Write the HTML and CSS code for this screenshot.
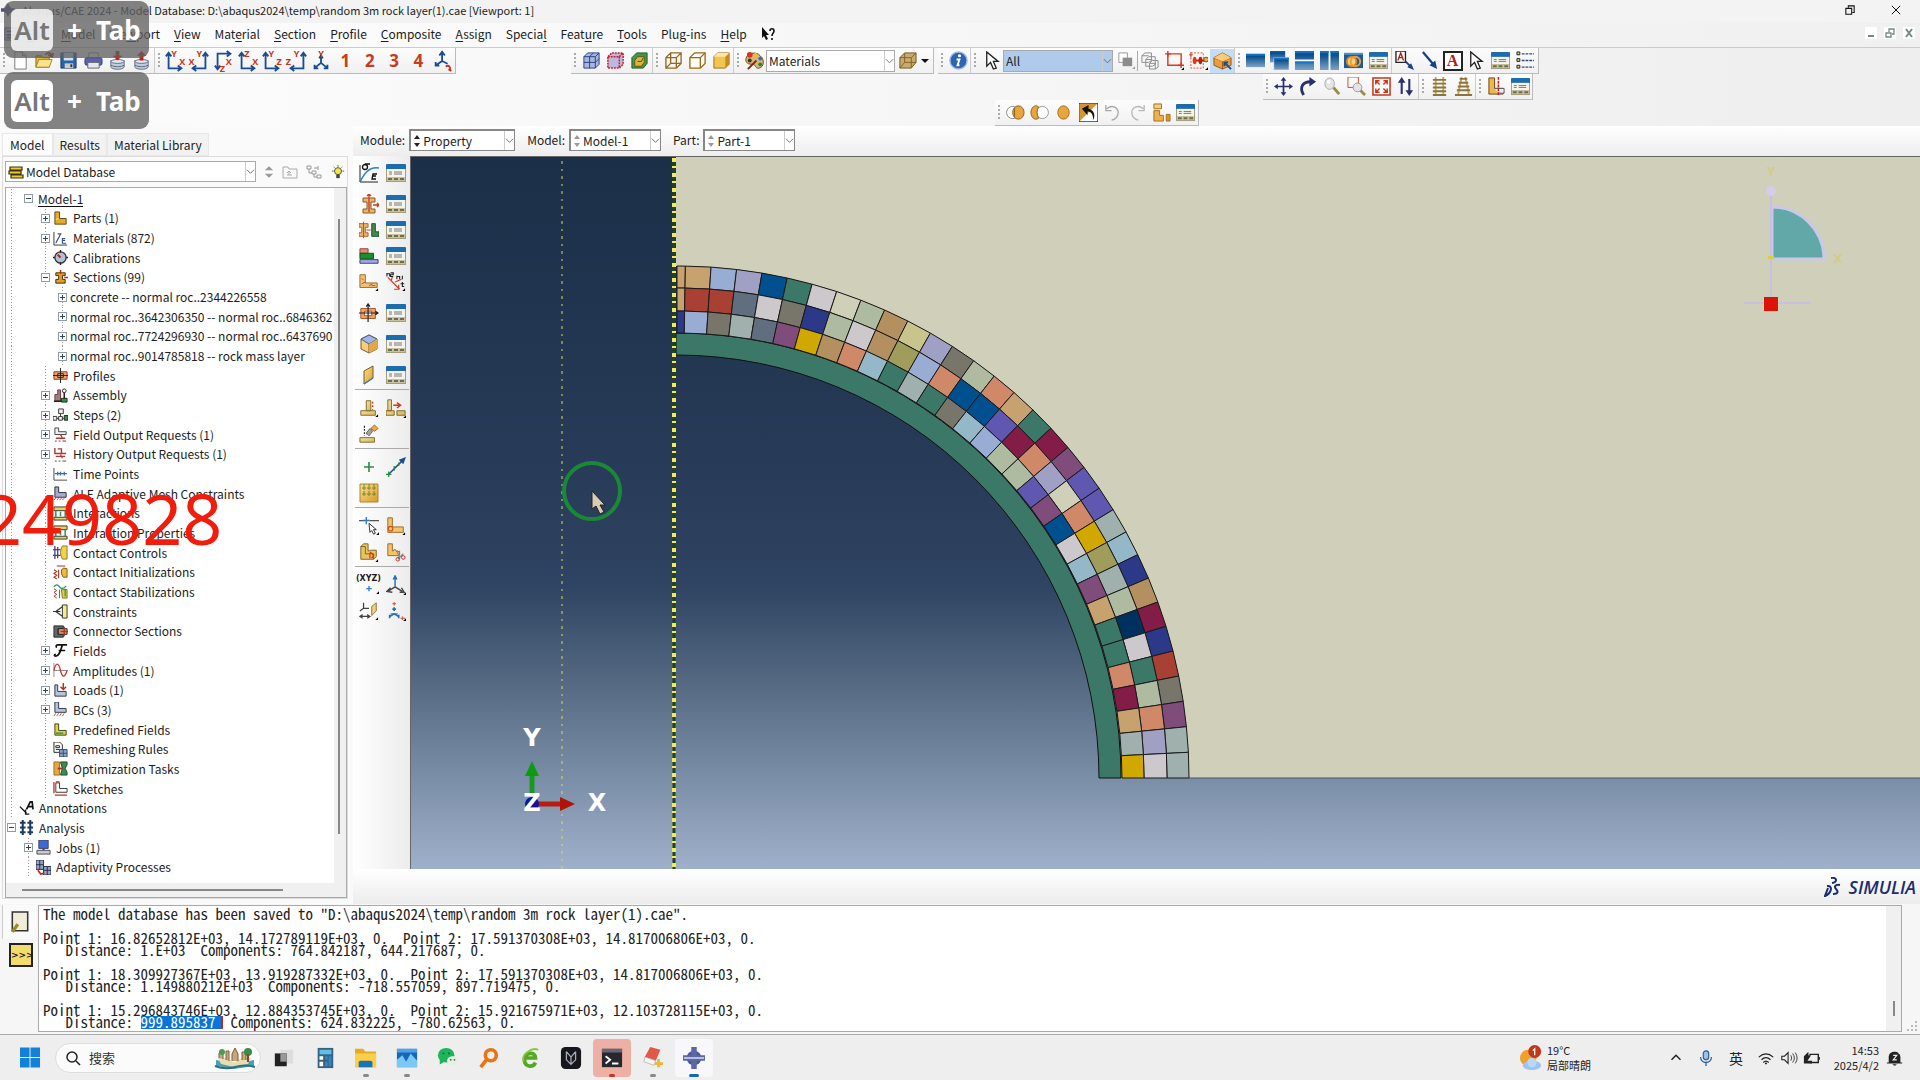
FILE: index.html
```html
<!DOCTYPE html>
<html lang="en">
<head>
<meta charset="utf-8">
<title>Abaqus/CAE 2024</title>
<link rel="stylesheet" href="styles.css">
</head>
<body>
<svg class="sprite" aria-hidden="true">
<defs>
<linearGradient id="g-blue" x1="0" y1="0" x2="0" y2="1"><stop offset="0" stop-color="#0a5ea8"/><stop offset=".2" stop-color="#0b4e8c"/><stop offset="1" stop-color="#7fa3c4"/></linearGradient>
<linearGradient id="g-gold" x1="0" y1="0" x2="1" y2="1"><stop offset="0" stop-color="#fbe08c"/><stop offset="1" stop-color="#d99a28"/></linearGradient>
<linearGradient id="g-tan" x1="0" y1="0" x2="1" y2="1"><stop offset="0" stop-color="#f4dca0"/><stop offset="1" stop-color="#d8b860"/></linearGradient>

<symbol id="new" viewBox="0 0 20 20"><path d="M4 1h8l4 4v14H4z" fill="#fff" stroke="#777"/><path d="M12 1v4h4" fill="#ddd" stroke="#777"/></symbol>
<symbol id="open" viewBox="0 0 20 20"><path d="M1 17V5h6l1 2h7v10z" fill="#e8b73c" stroke="#8a6a20"/><path d="M1 17l3-8h14l-3 8z" fill="#fbe38e" stroke="#a98222"/><path d="M11 4c3-4 6-2 6 1m-3-1l4 2 1-4" fill="none" stroke="#b02418" stroke-width="2"/></symbol>
<symbol id="save" viewBox="0 0 20 20"><path d="M2 2h16v16H2z" fill="#2a62a4" stroke="#1c3f6e"/><path d="M5 2h10v8H5z" fill="#cfe0f0"/><path d="M6 13h9v5H6z" fill="#ccc"/><path d="M12 14h2v3h-2z" fill="#333"/></symbol>
<symbol id="print" viewBox="0 0 20 20"><path d="M5 2h10v6H5z" fill="#fff" stroke="#888"/><rect x="1" y="7" width="18" height="8" rx="2" fill="#5a62a8" stroke="#38407c"/><path d="M4 12h12v6H4z" fill="#e6e6f2" stroke="#666"/></symbol>
<symbol id="dbdown" viewBox="0 0 20 20"><path d="M3 10v7c2 3 12 3 14 0v-7z" fill="#c4ccd8" stroke="#5a6a84"/><ellipse cx="10" cy="11" rx="7" ry="2" fill="#e8ecf2" stroke="#5a6a84"/><path d="M3 15c3 2 11 2 14 0" fill="none" stroke="#5a6a84"/><path d="M8 0h4v5h3l-5 5-5-5h3z" fill="#c81c14"/></symbol>
<symbol id="dbup" viewBox="0 0 20 20"><path d="M3 10v7c2 3 12 3 14 0v-7z" fill="#c4ccd8" stroke="#5a6a84"/><ellipse cx="10" cy="11" rx="7" ry="2" fill="#e8ecf2" stroke="#5a6a84"/><path d="M3 15c3 2 11 2 14 0" fill="none" stroke="#5a6a84"/><path d="M8 10V5H5l5-5 5 5h-3v5z" fill="#c81c14"/></symbol>

<symbol id="ax-l" viewBox="0 0 24 24"><path d="M5 4v16h13M2 7l3-4 3 4M15 17l4 3-4 3" fill="none" stroke="#1a4c94" stroke-width="2"/></symbol>
<symbol id="ax-r" viewBox="0 0 24 24"><path d="M19 4v16H6M16 7l3-4 3 4M9 17l-4 3 4 3" fill="none" stroke="#1a4c94" stroke-width="2"/></symbol>
<symbol id="ax-t" viewBox="0 0 24 24"><path d="M5 20V4h13M2 17l3 4 3-4M15 1l4 3-4 3" fill="none" stroke="#1a4c94" stroke-width="2"/></symbol>
<symbol id="ax-iso" viewBox="0 0 24 24"><path d="M12 7v7l-6 5m6-5l6 5M10 9l2-3 2 3M5 16v4h4m6 0h4v-4" fill="none" stroke="#1a4c94" stroke-width="2"/></symbol>
<symbol id="ax-rot" viewBox="0 0 24 24"><path d="M11 3v9l-7 5m7-5l6 3M8 6l3-4 3 4M4 13v4h4" fill="none" stroke="#1a4c94" stroke-width="2"/><path d="M15 18c3-2 5 0 5 4m-2-1l3 2" fill="none" stroke="#c83418" stroke-width="2"/></symbol>

<symbol id="meshcube" viewBox="0 0 20 20"><path d="M2 6l4-4h12v12l-4 4H2z" fill="#a9b7dc" stroke="#22408c"/><path d="M2 6h12v12M14 6l4-4M8 6v12M2 12h12l4-4M8 6l4-4" fill="none" stroke="#22408c"/></symbol>
<symbol id="edgecube" viewBox="0 0 20 20"><path d="M2 6l4-4h12v12l-4 4H2z" fill="#bbb8de"/><path d="M2 6l4-4h12v12l-4 4H2zM2 6h12v12M14 6l4-4" fill="none" stroke="#c81c30" stroke-width="1.6" stroke-dasharray="2 1"/></symbol>
<symbol id="greencube" viewBox="0 0 20 20"><path d="M2 7l5-5h11v11l-4 5H2z" fill="#3f9a45" stroke="#1d5c24"/><path d="M5 10l3-4h7v6l-3 4H5z" fill="#e0b53c" stroke="#6b5212"/><path d="M8 11h4l2-4" fill="none" stroke="#1d5c24"/></symbol>
<symbol id="wirecube" viewBox="0 0 20 20"><path d="M2 7l5-5h11v11l-5 5H2zM2 7h11v11M13 7l5-5M7 2v11h11M7 13l-5 5" fill="none" stroke="#96691c" stroke-width="1.4"/></symbol>
<symbol id="hidcube" viewBox="0 0 20 20"><path d="M2 7l5-5h11v11l-5 5H2z" fill="#fffdf4" stroke="#96691c" stroke-width="1.4"/><path d="M2 7h11v11M13 7l5-5" fill="none" stroke="#96691c" stroke-width="1.4"/></symbol>
<symbol id="goldcube" viewBox="0 0 20 20"><path d="M2 6l4-4h12v12l-4 4H2z" fill="#f2c64e" stroke="#a0701c"/><path d="M14 6l4-4v12l-4 4z" fill="#c68a1e"/><path d="M2 6l4-4h12l-4 4z" fill="#fbe7a6"/></symbol>
<symbol id="tancube" viewBox="0 0 20 20"><path d="M2 7l5-5h12v10l-5 6H2z" fill="#c8ab6c" stroke="#6f5520"/><path d="M2 7h12v11M14 7l5-5M7 2v10h12M7 12l-5 6" fill="none" stroke="#7d6228"/></symbol>
<symbol id="palette" viewBox="0 0 20 20"><path d="M1 8C2 2 12 0 16 5c5 4 4 12-1 13-5 1-3-4-7-4C4 14 0 13 1 8z" fill="#d9b678" stroke="#6e4c18"/><circle cx="5" cy="4" r="3" fill="#d9341c"/><circle cx="11" cy="4" r="2" fill="#f4c020"/><circle cx="16" cy="8" r="2" fill="#2b6fc0"/><circle cx="16" cy="14" r="2" fill="#208438"/><circle cx="5" cy="10" r="2" fill="#333"/><path d="M3 19l9-9" stroke="#8c2414" stroke-width="2"/></symbol>
<symbol id="info" viewBox="0 0 20 20"><circle cx="10" cy="10" r="9" fill="#2d63b0" stroke="#9db9dd" stroke-width="1.5"/><circle cx="11" cy="5" r="1.7" fill="#fff"/><path d="M8 9h3l-2 6h2" fill="none" stroke="#fff" stroke-width="2"/></symbol>
<symbol id="pointer" viewBox="0 0 20 20"><path d="M5 1v15l4-4 3 7 3-1-3-7h5z" fill="#fff" stroke="#222" stroke-width="1.4"/></symbol>
<symbol id="overlap" viewBox="0 0 20 20"><path d="M3 2h9v10H3z" fill="#fff" stroke="#999"/><path d="M7 7h10v9H7z" fill="#8c8c8c"/><path d="M17 19h3v-3z" fill="#999"/></symbol>
<symbol id="graycubes" viewBox="0 0 20 20"><path d="M1 5l3-3h7v8l-3 2H1zM5 9l3-3h7v8l-3 2H5zM9 13l3-3h6v7l-3 2H9z" fill="#f6f6f6" stroke="#8b8b8b"/><path d="M9 13h6v6M5 9h7M1 5h7" fill="none" stroke="#8b8b8b"/></symbol>
<symbol id="rectsel" viewBox="0 0 20 20"><path d="M3 3h14v12H3z" fill="none" stroke="#d9391e" stroke-width="1.5"/><path d="M0 3h6M3 0v6M14 15h6M17 12v6" stroke="#d9391e" stroke-width="1.5"/><path d="M17 20h3v-3z"/></symbol>
<symbol id="dragsel" viewBox="0 0 20 20"><path d="M2 2h13v16H2z" fill="none" stroke="#e05038" stroke-dasharray="2 1.4"/><path d="M0 4h4M2 1v6" stroke="#d9391e"/><path d="M4 10h14" stroke="#c0200c" stroke-width="2"/><ellipse cx="6" cy="10" rx="2" ry="4" fill="#d9391e"/><ellipse cx="12" cy="10" rx="2" ry="4" fill="#b8200c"/><circle cx="18" cy="9" r="2.5" fill="#e8b04c" stroke="#7c4a10"/><path d="M17 20h3v-3z"/></symbol>
<symbol id="boxsel" viewBox="0 0 20 20"><path d="M1 7l9-5 9 5v8l-9 4-9-4z" fill="#eb9c3c" stroke="#9a5712"/><path d="M1 7l9 4 9-4M10 11v8" fill="none" stroke="#9a5712"/><path d="M1 7l9-5 9 5-9 4z" fill="#fbca74"/><path d="M19 19l-7-7m0 4v-4h4" fill="none" stroke="#1a4c94" stroke-width="2"/></symbol>

<symbol id="w1" viewBox="0 0 20 20"><path d="M0 3h20v14H0z" fill="url(#g-blue)"/><path d="M0 3h20v2H0z" fill="#1273c4"/></symbol>
<symbol id="w2" viewBox="0 0 20 20"><path d="M0 0h16v12H0z" fill="url(#g-blue)"/><path d="M4 7h16v13H4z" fill="url(#g-blue)" stroke="#eef" stroke-width=".6"/><path d="M4 7h16v2H4z" fill="#1273c4"/></symbol>
<symbol id="w3" viewBox="0 0 20 20"><path d="M0 0h20v9H0zM0 11h20v9H0z" fill="url(#g-blue)"/><path d="M0 0h20v2H0zM0 11h20v2H0z" fill="#1273c4"/></symbol>
<symbol id="w4" viewBox="0 0 20 20"><path d="M0 0h9v20H0z" fill="url(#g-blue)"/><path d="M11 0h9v20h-9z" fill="url(#g-blue)"/><path d="M0 0h9v2H0zM11 0h9v2h-9z" fill="#1273c4"/></symbol>
<symbol id="w5" viewBox="0 0 20 20"><path d="M0 2h20v16H0z" fill="#1d5a9c"/><path d="M0 2h20v2H0z" fill="#4f94d0"/><circle cx="8" cy="11" r="5" fill="#f7d28c" stroke="#d9841c" stroke-width="2"/><circle cx="12" cy="11" r="5" fill="none" stroke="#f09c2c" stroke-width="2"/></symbol>
<symbol id="tbl" viewBox="0 0 20 20"><path d="M0 2h20v17H0z" fill="#a39d7c"/><path d="M1 6h18v8H1z" fill="#f4f4ec"/><path d="M0 2q0-1 1-1h18q1 0 1 1v4H0z" fill="#1b6db0"/><path d="M3 9h3m2 0h8M3 11h3m2 0h8" stroke="#777" stroke-width="1"/><path d="M1 14h18v4H1z" fill="#c8c2a0"/><path d="M2 15h4v2H2zM8 15h4v2H8zM14 15h4v2h-4z" fill="#6e6c50"/></symbol>
<symbol id="anno" viewBox="0 0 20 20"><path d="M1 0h10v12H1z" fill="#fff" stroke="#222" stroke-width="1.4"/><path d="M3 10l3-8 3 8M4 7h4" fill="none" stroke="#b02010" stroke-width="1.4"/><path d="M11 11l5 5" stroke="#173f8c" stroke-width="2"/><path d="M20 20l-7-3 4-4z" fill="#173f8c"/></symbol>
<symbol id="arrow" viewBox="0 0 20 20"><path d="M3 1l11 13" stroke="#173f8c" stroke-width="2.4"/><path d="M18 19l-8-4 6-5z" fill="#173f8c"/></symbol>
<symbol id="listopt" viewBox="0 0 20 20"><path d="M1 1h3v3H1zM1 8h3v3H1zM1 15h3v3H1z" fill="#cfd08c" stroke="#222"/><path d="M6 3h13M6 10h13M6 17h13" stroke="#3a4a80" stroke-width="1.4" stroke-dasharray="3 1"/></symbol>

<symbol id="pan" viewBox="0 0 20 20"><path d="M10 3v14M3 10h14" stroke="#28306e" stroke-width="1.8"/><path d="M10 0l3 4H7zM10 20l3-4H7zM0 10l4-3v6zM20 10l-4-3v6z" fill="#28306e"/></symbol>
<symbol id="rotate" viewBox="0 0 20 20"><path d="M6 19c-5-8-1-14 7-14" fill="none" stroke="#28306e" stroke-width="3"/><path d="M12 0l7 5-7 5z" fill="#28306e"/></symbol>
<symbol id="mag" viewBox="0 0 20 20"><path d="M11 11l6 7" stroke="#9b8a4a" stroke-width="3"/><ellipse cx="7" cy="7" rx="5" ry="6" fill="#e4e4e4" stroke="#aaa"/><ellipse cx="6" cy="5" rx="2" ry="2" fill="#fff"/></symbol>
<symbol id="magbox" viewBox="0 0 20 20"><path d="M1 0h11v11H1z" fill="none" stroke="#d04830"/><path d="M14 14l5 5" stroke="#9b8a4a" stroke-width="3"/><circle cx="11" cy="11" r="4.6" fill="#e4e4e4" stroke="#999"/></symbol>
<symbol id="fit" viewBox="0 0 20 20"><path d="M1 1h18v18H1z" fill="#fff" stroke="#c83418" stroke-width="1.6"/><path d="M8 8L4 4m0 4V4h4M12 8l4-4m-4 0h4v4M8 12l-4 4m0-4v4h4M12 12l4 4m0-4v4h-4" fill="none" stroke="#c83418" stroke-width="1.5"/></symbol>
<symbol id="updown" viewBox="0 0 20 20"><path d="M6 3v15M14 2v15" stroke="#28306e" stroke-width="2.2"/><path d="M6 0l4 6H2zM14 20l4-6h-8z" fill="#28306e"/></symbol>
<symbol id="ladder" viewBox="0 0 20 20"><path d="M6 0v20M14 0v20" stroke="#c6a754" stroke-width="2"/><path d="M3 3h14M3 7h14M3 11h14M3 15h14M3 19h14" stroke="#8b7440" stroke-width="2"/></symbol>
<symbol id="trap" viewBox="0 0 20 20"><path d="M8 0L4 20M12 0l4 20" stroke="#c6a754" stroke-width="2"/><path d="M6 2h8M5 6h10M4 10h12M3 14h14M1 19h18" stroke="#8b7440" stroke-width="2"/></symbol>
<symbol id="cutL" viewBox="0 0 20 20"><path d="M2 1h6v11h9v6H2z" fill="#eeb64c" stroke="#6a4410"/><path d="M8 12h10v5h-6" fill="#eef" stroke="#555"/><path d="M12 0v20" stroke="#c0200c" stroke-width="1.6" stroke-dasharray="3 1"/></symbol>

<symbol id="venn1" viewBox="0 0 20 20"><circle cx="7" cy="10" r="6.4" fill="#fff" stroke="#888"/><ellipse cx="13" cy="10" rx="6" ry="7" fill="#e9a43c" stroke="#8b6420"/><path d="M9 5v10" stroke="#8b6420"/></symbol>
<symbol id="venn2" viewBox="0 0 20 20"><circle cx="13" cy="10" r="6.4" fill="#fff" stroke="#999"/><path d="M9 4C5 1 1 5 1 10s4 9 8 6c-2-4-2-8 0-12z" fill="#e9a43c" stroke="#8b6420"/></symbol>
<symbol id="venn3" viewBox="0 0 20 20"><ellipse cx="10" cy="10" rx="6" ry="7" fill="#e9a43c" stroke="#a5701c"/></symbol>
<symbol id="swap" viewBox="0 0 20 20"><path d="M0 0h20v20H0z" fill="#fff" stroke="#333" stroke-width="1.4"/><path d="M1 1h18L1 19z" fill="#d99432"/><path d="M15 18c0-7-3-9-6-9v4L3 6l7-4v4c5 1 8 6 5 12z" fill="#111"/></symbol>
<symbol id="undo" viewBox="0 0 20 20"><path d="M4 6c6-5 12-1 12 4s-4 8-7 8M3 2v6h6" fill="none" stroke="#a8a8a8" stroke-width="1.4"/></symbol>
<symbol id="redo" viewBox="0 0 20 20"><path d="M16 6c-6-5-12-1-12 4s4 8 7 8M17 2v6h-6" fill="none" stroke="#b8b8b8" stroke-width="1.4"/></symbol>
<symbol id="parts3" viewBox="0 0 20 20"><path d="M2 1h8v5H2z" fill="#f0cf80" stroke="#a5701c"/><path d="M2 8h6v5h4v6H2z" fill="#efb04c" stroke="#a5701c"/><path d="M15 12h4v7h-4z" fill="#d99432" stroke="#a5701c"/></symbol>

<symbol id="sigeps" viewBox="0 0 20 20"><path d="M1 2v17h18" fill="none" stroke="#222"/><path d="M1 19C5 11 10 3 20 5" fill="none" stroke="#2c7cc8" stroke-width="1.6"/><circle cx="6" cy="4" r="2.5" fill="none" stroke="#111" stroke-width="1.3"/><path d="M6 1h5M18 11h-4l-1 5h4M13 13h4" fill="none" stroke="#111" stroke-width="1.3"/></symbol>
<symbol id="ibeam" viewBox="0 0 20 20"><path d="M4 4h12v4h-4v7h4v4H4v-4h4V8H4z" fill="#eab46c" stroke="#8a5a20"/><path d="M10 0v18M8 2l2-2 2 2M14 11h6M18 9l2 2-2 2" fill="none" stroke="#d03820" stroke-width="1.3"/></symbol>
<symbol id="ibeamL" viewBox="0 0 22 20"><path d="M0 3h10v4H7v6h3v4H0v-4h3V7H0z" fill="#eab46c" stroke="#b05a30"/><path d="M5 1v18M8 10h5" stroke="#d03820"/><path d="M14 3h4v9h4v5h-8z" fill="#3f8a4c" stroke="#1e4c28"/></symbol>
<symbol id="stack" viewBox="0 0 22 20"><path d="M1 2h9v5H1z" fill="#e08c78" stroke="#8a4434"/><path d="M1 7h15v6H1z" fill="#18912c" stroke="#0c4c18"/><path d="M1 14h20v4H1z" fill="#a4a8e8" stroke="#34386c"/></symbol>
<symbol id="L3" viewBox="0 0 22 20"><path d="M1 2h6v9h13v5H1z" fill="#f0c078" stroke="#96641c"/><path d="M3 6l2 2m-2 4l4-2m4 4l4-2m-1 2h4" stroke="#c04420"/><path d="M18 20h3v-3z"/></symbol>
<symbol id="n2n1" viewBox="0 0 22 20"><path d="M2 5l13 13m-1-5v5h-5M6 8l1-4m3 6l7-3" fill="none" stroke="#d03820" stroke-width="1.3"/><path d="M1 0v4m0-3h3v3M5 0h3v2H5v2h3M12 3v4m0-3h3v3m3-4v4M18 10v5h2m-4-3h4" fill="none" stroke="#222" stroke-width="1.2"/><path d="M18 20h3v-3z"/></symbol>
<symbol id="profile" viewBox="0 0 22 20"><path d="M2 5h16v11H2z" fill="#f0a468" stroke="#a04c1c"/><path d="M6 8h8v5H6z" fill="#fff" stroke="#a04c1c"/><path d="M10 0v20M0 10h20M8 3l2-3 2 3M18 8l3 2-3 2" fill="none" stroke="#222" stroke-width="1.3"/></symbol>
<symbol id="boxy" viewBox="0 0 20 20"><path d="M2 5l8-4 8 4v10l-8 4-8-4z" fill="#f4cc84" stroke="#7a5a24"/><path d="M2 5l8-4 8 4-8 5z" fill="#9cb8e8" stroke="#4c5c84"/><path d="M10 10v9" stroke="#7a5a24"/><path d="M10 10l8-5v10l-8 4z" fill="#e0a848"/></symbol>
<symbol id="plate" viewBox="0 0 20 20"><path d="M5 6l9-5v12l-9 6z" fill="url(#g-gold)" stroke="#7a5a24"/><path d="M5 19l9-6" stroke="#2c7cc8" stroke-width="1.4"/></symbol>
<symbol id="tee" viewBox="0 0 22 20"><path d="M2 13h16v5H2z" fill="url(#g-tan)" stroke="#7a6420"/><path d="M8 2h5v11H8z" fill="url(#g-tan)" stroke="#7a6420"/><path d="M15 3v9" stroke="#c83418" stroke-width="1.5" stroke-dasharray="2 2"/><path d="M18 20h3v-3z"/></symbol>
<symbol id="teemove" viewBox="0 0 22 20"><path d="M2 1h4v12H2zM0 13h9v5H0zM12 13h9v5h-9z" fill="url(#g-tan)" stroke="#7a6420"/><path d="M8 7h7m-3-3l4 3-4 3" fill="none" stroke="#d03820" stroke-width="1.6"/><path d="M19 21h3v-3z"/></symbol>
<symbol id="erasers" viewBox="0 0 22 20"><path d="M1 14h16v5H1z" fill="url(#g-tan)" stroke="#7a6420"/><path d="M6 1v11M14 4l-6 6" stroke="#222" stroke-dasharray="2 1.5" stroke-width="1.3"/><path d="M8 9l4-5 3 3-4 5z" fill="#a8a0a8" stroke="#666"/><path d="M13 4l4-4 4 4-4 3z" fill="#f0a848" stroke="#a06c20"/></symbol>
<symbol id="plus" viewBox="0 0 20 20"><path d="M10 5v10M5 10h10" stroke="#2a8c40" stroke-width="1.6"/></symbol>
<symbol id="axisline" viewBox="0 0 22 22"><path d="M3 19L18 4" stroke="#1a4c94" stroke-width="1.6"/><path d="M22 0l-3 8-5-5z" fill="#1a4c94"/><path d="M3 16v6M0 19h6M9 10v5M14 6v4" stroke="#2a8c40" stroke-width="1.4"/></symbol>
<symbol id="gridpts" viewBox="0 0 20 20"><path d="M1 1h18v18H1z" fill="url(#g-gold)" stroke="#b08430"/><path d="M5 1v6M10 1v6M15 1v6M3 5h4M8 5h4M13 5h4M5 8v5M10 8v5M15 8v5M3 11h4M8 11h4M13 11h4" stroke="#6f8c2c" stroke-width="1"/></symbol>
<symbol id="ptpick" viewBox="0 0 22 20"><path d="M0 4h5m7 0h10" stroke="#555" stroke-width="1.3"/><path d="M8 0v8M4 4h8" stroke="#2c7cc8" stroke-width="1.5"/><path d="M11 7l1 10 2-2 2 4 2-1-2-4h3z" fill="#fff" stroke="#222"/><path d="M19 20h3v-3z"/></symbol>
<symbol id="Lhole" viewBox="0 0 22 20"><path d="M2 1h5v10h12v6H2z" fill="#f2c46c" stroke="#96641c"/><circle cx="5" cy="13" r="2.5" fill="none" stroke="#d0541c" stroke-width="1.3"/><path d="M18 20h3v-3z"/></symbol>
<symbol id="L3d" viewBox="0 0 22 20"><path d="M2 4l3-3h5v8l3-1h6v7l-3 3H2z" fill="#e8c460" stroke="#7a6020"/><path d="M2 4h5v8h9v6" fill="none" stroke="#7a6020"/><path d="M12 10l4 3-2 4m-2-6v6" stroke="#d0441c" stroke-width="1.5" fill="none"/><path d="M18 21h3v-3z"/></symbol>
<symbol id="Lcut" viewBox="0 0 22 20"><path d="M2 1h5v8l3-2 2 3 3-1v5H2z" fill="#f2c46c" stroke="#96641c"/><path d="M12 8l3 9m4-5l-6 6" stroke="#888" stroke-width="1.4"/><circle cx="13" cy="18" r="2" fill="none" stroke="#c0281c"/><circle cx="19" cy="16" r="2" fill="none" stroke="#c0281c"/></symbol>
<symbol id="xyzp" viewBox="0 0 22 22"><path d="M11 12v6M8 15h6" stroke="#2c7cc8" stroke-width="1.5"/><path d="M19 21h3v-3z"/></symbol>
<symbol id="csys" viewBox="0 0 22 20"><path d="M10 12V1M8 4l2-4 2 4" fill="none" stroke="#2470b8" stroke-width="1.6"/><path d="M10 12l-8 5m8-5l8 5M5 13l-4 4 6 1M15 18h5l-3-5" fill="none" stroke="#444" stroke-width="1.5"/><path d="M19 21h3v-3z"/></symbol>
<symbol id="csysplane" viewBox="0 0 22 20"><path d="M5 1v6l-4 3m4-3h6M2 16h9M4 14l-3 2 3 2M9 14l3 2-3 2" fill="none" stroke="#444" stroke-width="1.4"/><path d="M14 5l5-4v9l-5 5z" fill="#f0d080" stroke="#8a7430"/><path d="M18 20h3v-3z"/></symbol>
<symbol id="csyspts" viewBox="0 0 22 20"><path d="M7 2h4M9 0v4M5 13h8M16 18h5M18 16v4" stroke="#d0542c" stroke-width="1.2"/><path d="M9 6v4M7 8h4M9 13l-5 3m5-3l5 3M4 14v4M14 14v4" stroke="#2470b8" stroke-width="1.8"/><path d="M19 21h3v-3z"/></symbol>

<symbol id="t-part" viewBox="0 0 16 16"><path d="M2 1h5v7h7v6H2z" fill="#e0ac2c" stroke="#5c4410"/><path d="M3 9l3-1" stroke="#fbe38e"/></symbol>
<symbol id="t-mat" viewBox="0 0 16 16"><path d="M1 1v14h14" fill="none" stroke="#333"/><path d="M3 13C5 8 8 5 8 3M5 3h4M13 8h-3v5h4M10 10h3" fill="none" stroke="#36508c" stroke-width="1.2"/></symbol>
<symbol id="t-cal" viewBox="0 0 16 16"><circle cx="8" cy="8" r="6" fill="#b4c0d8" stroke="#333" stroke-width="1.4"/><path d="M5 5l3 3" stroke="#b02010" stroke-width="2"/><path d="M8 0v3m0 10v3M0 8h2m12 0h2" stroke="#222" stroke-width="1.5"/></symbol>
<symbol id="t-sec" viewBox="0 0 16 16"><path d="M3 3h10v3h-3v4h3v4H3v-4h3V6H3z" fill="#e0a02c" stroke="#3c2808"/><path d="M8 0v4M12 8h4" stroke="#c02818" stroke-width="1.5"/></symbol>
<symbol id="t-prof" viewBox="0 0 16 16"><path d="M1 4h14v8H1z" fill="#f0a468" stroke="#8c3c14"/><path d="M8 0v16M0 8h16M5 6h6v4H5z" fill="none" stroke="#222"/></symbol>
<symbol id="t-asm" viewBox="0 0 16 16"><path d="M2 14V7h3V2h3v12z" fill="#888" stroke="#8c2c34"/><path d="M1 14h8M12 4v9" stroke="#222" stroke-width="1.6"/><path d="M9 11h6v4H9z" fill="#2e9444" stroke="#222"/><circle cx="12" cy="3" r="2" fill="#fff" stroke="#222"/></symbol>
<symbol id="t-step" viewBox="0 0 16 16"><path d="M0 9h4v4H0zM6 9h4v4H6zM6 1h5v5H6z" fill="#eee" stroke="#333"/><path d="M12 8h4v5h-4z" fill="#2e9444" stroke="#222"/><path d="M4 11h2m4 0h2M8 6v3" stroke="#333"/></symbol>
<symbol id="t-fout" viewBox="0 0 16 16"><path d="M2 1h4v4h8v3H2z" fill="#eee" stroke="#444"/><path d="M8 8l2 4M3 12h10" stroke="#b8342c" stroke-width="1.4"/><path d="M2 15h2m2 0h2m2 0h4" stroke="#444"/></symbol>
<symbol id="t-hout" viewBox="0 0 16 16"><path d="M2 1v6h12M5 2h4v5" fill="none" stroke="#a43c3c" stroke-width="1.5"/><path d="M3 10h10M8 8l2 4" stroke="#b8342c" stroke-width="1.3"/><path d="M2 15h2m2 0h2m2 0h4" stroke="#444"/></symbol>
<symbol id="t-time" viewBox="0 0 16 16"><path d="M1 1v13h14" fill="none" stroke="#444"/><path d="M2 7h13M5 5v4M8 5v4M12 5v4" stroke="#3c6c94" stroke-width="1.4"/></symbol>
<symbol id="t-ale" viewBox="0 0 16 16"><path d="M2 1h4v6h8v5H2z" fill="#a4acd0" stroke="#2c2c3c"/><path d="M1 15l2-2m1 2l2-2m1 2l2-2m1 2l2-2" stroke="#b8342c"/></symbol>
<symbol id="t-int" viewBox="0 0 16 16"><path d="M1 1h14v4H1zM1 12h14v3H1z" fill="#e8d060" stroke="#333"/><path d="M3 5v7m10-7v7M8 6v5" stroke="#3c8c64" stroke-width="1.6"/></symbol>
<symbol id="t-cc" viewBox="0 0 16 16"><path d="M10 1h5v14h-5q-4-7 0-14z" fill="#ecd44c" stroke="#8c7820"/><path d="M2 1v14M5 2v12M0 5h8M0 11h8" stroke="#4c3c8c" stroke-width="1.4"/></symbol>
<symbol id="t-ci" viewBox="0 0 16 16"><path d="M9 5q2-3 6-1v9h-4q-3-3-2-8z" fill="#eeb83c" stroke="#7c5c18"/><path d="M1 5l3 2-3 2 3 2-3 2 3 2M4 1h9M6 5v9" fill="none" stroke="#a83424" stroke-width="1.2"/></symbol>
<symbol id="t-cs" viewBox="0 0 16 16"><path d="M9 6h6v9h-5z" fill="#e0d444" stroke="#7c7418"/><path d="M1 5l3 2-3 2 3 2-3 2 3 2M7 6v9" fill="none" stroke="#a83424"/><path d="M1 3q3-4 6 0t7-1M13 5v8" fill="none" stroke="#2c9470" stroke-width="1.4"/></symbol>
<symbol id="t-con" viewBox="0 0 16 16"><path d="M10 1h5v14h-5z" fill="#f4ec88" stroke="#333"/><path d="M10 3L3 8l7 5M0 8h8" fill="none" stroke="#333" stroke-width="1.3"/></symbol>
<symbol id="t-cns" viewBox="0 0 16 16"><path d="M1 2h10v3H5v6h6v3H1z" fill="#666" stroke="#222"/><path d="M6 5h9v6H6z" fill="#d8a070" stroke="#222"/><path d="M8 8h8M12 3v10" stroke="#a83424" stroke-width="1.4"/></symbol>
<symbol id="t-fld" viewBox="0 0 16 16"><path d="M5 2h10M10 2c-2 6-3 12-7 12-2 0-2-2 0-2M6 8h7M5 2C3 2 3 4 4 5" fill="none" stroke="#111" stroke-width="1.8"/></symbol>
<symbol id="t-amp" viewBox="0 0 16 16"><path d="M1 0v15M1 8h15" stroke="#888"/><path d="M1 8c2-9 5-9 7 0s5 7 7 0" fill="none" stroke="#c0382c" stroke-width="1.4"/></symbol>
<symbol id="t-load" viewBox="0 0 16 16"><path d="M2 2h3v7h9v5H2z" fill="#b8c4dc" stroke="#2c3444"/><path d="M11 0v6M8 4l3 3 3-3" fill="none" stroke="#c02818" stroke-width="1.5"/></symbol>
<symbol id="t-bc" viewBox="0 0 16 16"><path d="M2 0h4v7h8v4H2z" fill="#b8c4dc" stroke="#2c3444"/><path d="M1 15l2-3m1 3l2-3m1 3l2-3m1 3l2-3" stroke="#c05030"/></symbol>
<symbol id="t-pre" viewBox="0 0 16 16"><path d="M2 2h4v7h8v5H2z" fill="#e4d444" stroke="#3c3c14"/><path d="M3 12h8" stroke="#3ca050" stroke-width="2"/></symbol>
<symbol id="t-rem" viewBox="0 0 16 16"><path d="M1 0h6l3 3v8H1z" fill="#fff" stroke="#222"/><path d="M3 4h4v2H3zM3 8h4" stroke="#222" fill="none"/><path d="M7 8h8v8H7z" fill="#8ca0c4" stroke="#3c4c6c"/><path d="M11 8v8M7 12h8" stroke="#3c4c6c"/></symbol>
<symbol id="t-opt" viewBox="0 0 16 16"><path d="M1 1h6v14H1z" fill="#e8a840" stroke="#9c6c18"/><path d="M8 1h7v3l-2 4 2 4v3H8l2-7z" fill="#3c8c4c" stroke="#1c4c28"/><path d="M5 8h5" stroke="#c02818" stroke-width="2"/></symbol>
<symbol id="t-sk" viewBox="0 0 16 16"><path d="M3 2h4v6h8v4H3z" fill="#fff" stroke="#333"/><path d="M1 1v12M2 15h13M3 1h4" stroke="#b8342c" stroke-width="1.4"/></symbol>
<symbol id="t-ann" viewBox="0 0 16 16"><path d="M1 6l7 7m-1-4v5h4" fill="none" stroke="#111" stroke-width="1.4"/><path d="M8 9l4-8h2l1 8M10 6h4" fill="none" stroke="#111" stroke-width="1.8"/></symbol>
<symbol id="t-ana" viewBox="0 0 16 16"><path d="M4 0v16M12 0v16M1 3h6M9 3h6M1 8h6M9 8h6M1 13h6M9 13h6" stroke="#1c3c64" stroke-width="2.2"/></symbol>
<symbol id="t-job" viewBox="0 0 16 16"><path d="M3 0h10v9H3z" fill="#3c68d8" stroke="#445"/><path d="M1 11h14v4H1z" fill="#ccc" stroke="#445"/><path d="M7 9h2v2H7z" fill="#445"/></symbol>
<symbol id="t-ada" viewBox="0 0 16 16"><path d="M0 0h8v10H0zM8 7h8v9H8z" fill="#94a4c4" stroke="#222c44"/><path d="M4 0v10M0 5h8M12 7v9M8 11h8" stroke="#222c44"/><path d="M2 11l3 4 4-1" fill="none" stroke="#c02818" stroke-width="1.8"/></symbol>
<symbol id="chev" viewBox="0 0 10 10"><path d="M1 3l4 4 4-4" fill="none" stroke="#666"/></symbol>
<symbol id="spin" viewBox="0 0 8 16"><path d="M4 2l3 4H1zM4 14l3-4H1z" fill="currentColor"/></symbol>
</defs>
</svg>

<header class="titlebar">
  <svg class="appicon" viewBox="0 0 16 16"><path d="M8 0l2 4a5 5 0 0 1 2 2h4v4h-4a5 5 0 0 1-2 2l-2 4-2-4a5 5 0 0 1-2-2H0V6h4a5 5 0 0 1 2-2z" fill="#4c5080"/></svg>
  <span class="title">Abaqus/CAE 2024 - Model Database: D:\abaqus2024\temp\random 3m rock layer(1).cae [Viewport: 1]</span>
  <button class="winbtn" aria-label="Restore"><svg viewBox="0 0 12 12"><path d="M1 4h7v7H1zM4 3V1h7v8H9" fill="none" stroke="#111" stroke-width="1.3"/></svg></button>
  <button class="winbtn" aria-label="Close"><svg viewBox="0 0 12 12"><path d="M1 1l10 10M11 1L1 11" stroke="#111" stroke-width="1.2"/></svg></button>
</header>

<nav class="menubar">
  <svg class="appicon" viewBox="0 0 16 16"><path d="M1 1h14v14H1z" fill="#c8d0e4" stroke="#3c4878"/><path d="M3 5h10M3 9h10M3 12h6" stroke="#3c4878" stroke-width="2"/></svg>
  <button><u>F</u>ile</button><button><u>M</u>odel</button><button>Vie<u>w</u>port</button><button><u>V</u>iew</button><button>Mat<u>e</u>rial</button><button><u>S</u>ection</button><button><u>P</u>rofile</button><button><u>C</u>omposite</button><button><u>A</u>ssign</button><button>Specia<u>l</u></button><button>Feat<u>u</u>re</button><button><u>T</u>ools</button><button>Plu<u>g</u>-ins</button><button><u>H</u>elp</button>
  <button aria-label="Context help"><svg class="helpicon" viewBox="0 0 14 14"><path d="M1 0v11l2-2 2 4 2-1-2-4h3z" fill="#111"/><path d="M9 4c0-3 4-3 4 0 0 2-2 2-2 5m0 2v2" fill="none" stroke="#111" stroke-width="1.6"/></svg></button>
  <span class="mdi"><button aria-label="Minimize viewport"><svg viewBox="0 0 10 10"><path d="M2 8h6" stroke="#788" stroke-width="2"/></svg></button><button aria-label="Restore viewport"><svg viewBox="0 0 10 10"><path d="M1 5h5v4H1zM4 4V1h5v5H7" fill="none" stroke="#788" stroke-width="1.3"/></svg></button><button aria-label="Close viewport"><svg viewBox="0 0 10 10"><path d="M2 1l6 8M8 1L2 9" stroke="#788" stroke-width="2"/></svg></button></span>
</nav>

<section class="dock">
  <div class="dockrow">
    <div class="bar">
      <div class="grp g-file"><i class="grip"></i><div class="set">
        <button aria-label="New"><svg><use href="#new"/></svg></button><button aria-label="Open"><svg><use href="#open"/></svg></button><button aria-label="Save"><svg><use href="#save"/></svg></button><button aria-label="Print"><svg><use href="#print"/></svg></button><button aria-label="Import"><svg><use href="#dbdown"/></svg></button><button aria-label="Export"><svg><use href="#dbup"/></svg></button></div></div>
      <div class="grp g-views"><i class="grip"></i><div class="set big">
        <button><svg><use href="#ax-l"/></svg><b class="p1">Y</b><b class="p2">X</b></button><button><svg><use href="#ax-r"/></svg><b class="p3">Y</b><b class="p4">X</b></button><button><svg><use href="#ax-t"/></svg><b class="p5">X</b><b class="p6">Z</b></button><button><svg><use href="#ax-l"/></svg><b class="p1">Z</b><b class="p2">X</b></button><button><svg><use href="#ax-l"/></svg><b class="p1">Y</b><b class="p2">Z</b></button><button><svg><use href="#ax-r"/></svg><b class="p3">Y</b><b class="p4">Z</b></button><button aria-label="Isometric view"><svg><use href="#ax-iso"/></svg><b class="p7">Y</b></button><button class="num">1</button><button class="num">2</button><button class="num">3</button><button class="num">4</button><button aria-label="Save view"><svg><use href="#ax-rot"/></svg></button></div></div>
    </div>
    <div class="bar b-display">
      <div class="grp g-three"><i class="grip"></i><div class="set"><button aria-label="Mesh"><svg><use href="#meshcube"/></svg></button><button aria-label="Seeds"><svg><use href="#edgecube"/></svg></button><button aria-label="Substructure"><svg><use href="#greencube"/></svg></button></div></div>
      <div class="grp g-three"><i class="grip"></i><div class="set"><button aria-label="Wireframe"><svg><use href="#wirecube"/></svg></button><button aria-label="Hidden"><svg><use href="#hidcube"/></svg></button><button aria-label="Shaded"><svg><use href="#goldcube"/></svg></button></div></div>
      <div class="grp"><i class="grip"></i><button aria-label="Color code"><svg><use href="#palette"/></svg></button>
        <div class="combo c-mat"><select aria-label="Color by"><option>Materials</option></select><svg><use href="#chev"/></svg></div>
        <button aria-label="Translucency"><svg><use href="#tancube"/></svg></button><i class="drop"></i></div>
    </div>
    <div class="bar b-select">
      <div class="grp g-info"><i class="grip"></i><button aria-label="Query"><svg><use href="#info"/></svg></button></div>
      <div class="grp"><i class="grip"></i><button aria-label="Select"><svg><use href="#pointer"/></svg></button>
        <div class="combo c-all"><select aria-label="Selection filter"><option>All</option></select><svg><use href="#chev"/></svg></div>
        <button aria-label="Overlap"><svg><use href="#overlap"/></svg></button><i class="vsep"></i>
        <button aria-label="Depth"><svg><use href="#graycubes"/></svg></button><button aria-label="Rectangle select"><svg><use href="#rectsel"/></svg></button><button aria-label="Drag select"><svg><use href="#dragsel"/></svg></button><button class="on" aria-label="Exterior"><svg><use href="#boxsel"/></svg></button></div>
      <div class="grp g-win"><i class="grip"></i><div class="set"><button aria-label="New viewport"><svg><use href="#w1"/></svg></button><button aria-label="Cascade"><svg><use href="#w2"/></svg></button><button aria-label="Tile horizontally"><svg><use href="#w3"/></svg></button><button aria-label="Tile vertically"><svg><use href="#w4"/></svg></button><button aria-label="Link viewports"><svg><use href="#w5"/></svg></button><button aria-label="Link manager"><svg><use href="#tbl"/></svg></button></div></div>
      <div class="grp g-anno"><div class="set"><button aria-label="Callout"><svg><use href="#anno"/></svg></button><button aria-label="Arrow"><svg><use href="#arrow"/></svg></button><button class="boxed" aria-label="Text">A</button><button aria-label="Edit annotation"><svg><use href="#pointer"/></svg></button><button aria-label="Annotation manager"><svg><use href="#tbl"/></svg></button><button aria-label="Annotation options"><svg><use href="#listopt"/></svg></button></div></div>
    </div>
  </div>
  <div class="dockrow r2">
    <div class="bar">
      <div class="grp g-pan"><i class="grip"></i><div class="set"><button aria-label="Pan"><svg><use href="#pan"/></svg></button><button aria-label="Rotate"><svg><use href="#rotate"/></svg></button><button aria-label="Magnify"><svg><use href="#mag"/></svg></button><button aria-label="Box zoom"><svg><use href="#magbox"/></svg></button><button aria-label="Fit"><svg><use href="#fit"/></svg></button><button aria-label="Cycle"><svg><use href="#updown"/></svg></button></div></div>
      <div class="grp g-two"><i class="grip"></i><div class="set"><button aria-label="Parallel"><svg><use href="#ladder"/></svg></button><button aria-label="Perspective"><svg><use href="#trap"/></svg></button></div></div>
      <div class="grp g-two"><i class="grip"></i><div class="set"><button aria-label="View cut"><svg><use href="#cutL"/></svg></button><button aria-label="View cut manager"><svg><use href="#tbl"/></svg></button></div></div>
    </div>
  </div>
  <div class="dockrow r3">
    <div class="bar"><div class="grp g-bool"><i class="grip"></i><div class="set"><button aria-label="Replace"><svg><use href="#venn1"/></svg></button><button aria-label="Remove"><svg><use href="#venn2"/></svg></button><button aria-label="All"><svg><use href="#venn3"/></svg></button><button aria-label="Invert"><svg><use href="#swap"/></svg></button><button aria-label="Undo"><svg><use href="#undo"/></svg></button><button aria-label="Redo"><svg><use href="#redo"/></svg></button><button aria-label="Display groups"><svg><use href="#parts3"/></svg></button><button aria-label="Display group manager"><svg><use href="#tbl"/></svg></button></div></div></div>
  </div>
</section>

<main class="work">
  <aside class="side">
    <div class="tabs"><button class="cur">Model</button><button>Results</button><button>Material Library</button></div>
    <div class="panel">
      <div class="dbrow">
        <div class="combo c-db"><svg class="dbico" viewBox="0 0 16 14"><path d="M2 2h12v3H2zM1 6h12v3H1zM3 10h12v3H3z" fill="#e8c83c" stroke="#3c3008" stroke-width="1.2"/></svg><select aria-label="Database"><option>Model Database</option></select><svg><use href="#chev"/></svg></div>
        <svg class="dim" viewBox="0 0 12 16"><path d="M6 1l5 5H1zM6 15l5-5H1z" fill="#999"/></svg>
        <button aria-label="Up one level"><svg viewBox="0 0 16 14"><path d="M1 2h5l1 2h8v9H1zM5 10h5M7 10V6M5 8l2-2 2 2" fill="none" stroke="#aaa"/></svg></button>
        <button aria-label="Filter tree"><svg viewBox="0 0 16 14"><path d="M1 1h4v3H1zM6 6h4v3H6zM11 10h4v3h-4zM3 4v4h3M8 9v3h3M8 3h4M12 1v4" fill="none" stroke="#999"/></svg></button>
        <button aria-label="Tip"><svg viewBox="0 0 16 16"><circle cx="8" cy="7" r="4" fill="#f0e458" stroke="#4c4810"/><path d="M6 11h4v4H6z" fill="#444"/><path d="M8 0v2M1 7h2m10 0h2M3 2l1 1m9-1l-1 1" stroke="#5c5810"/></svg></button>
      </div>
      <div class="tree">
        <div class="treebody">
        <ul>
          <li class="l1 m"><i class="ex minus"></i><span class="root">Model-1</span></li>
          <li class="l2 m"><i class="ex"></i><svg><use href="#t-part"/></svg>Parts (1)</li>
          <li class="l2 m"><i class="ex"></i><svg><use href="#t-mat"/></svg>Materials (872)</li>
          <li class="l2 m"><i class="leaf"></i><svg><use href="#t-cal"/></svg>Calibrations</li>
          <li class="l2 m"><i class="ex minus"></i><svg><use href="#t-sec"/></svg>Sections (99)</li>
          <li class="l3 m"><i class="ex"></i>concrete -- normal roc..2344226558</li>
          <li class="l3 m"><i class="ex"></i>normal roc..3642306350 -- normal roc..6846362</li>
          <li class="l3 m"><i class="ex"></i>normal roc..7724296930 -- normal roc..6437690</li>
          <li class="l3 m"><i class="ex"></i>normal roc..9014785818 -- rock mass layer</li>
          <li class="l2 m"><i class="leaf"></i><svg><use href="#t-prof"/></svg>Profiles</li>
          <li class="l2 m"><i class="ex"></i><svg><use href="#t-asm"/></svg>Assembly</li>
          <li class="l2 m"><i class="ex"></i><svg><use href="#t-step"/></svg>Steps (2)</li>
          <li class="l2 m"><i class="ex"></i><svg><use href="#t-fout"/></svg>Field Output Requests (1)</li>
          <li class="l2 m"><i class="ex"></i><svg><use href="#t-hout"/></svg>History Output Requests (1)</li>
          <li class="l2 m"><i class="leaf"></i><svg><use href="#t-time"/></svg>Time Points</li>
          <li class="l2 m"><i class="leaf"></i><svg><use href="#t-ale"/></svg>ALE Adaptive Mesh Constraints</li>
          <li class="l2 m"><i class="leaf"></i><svg><use href="#t-int"/></svg>Interactions</li>
          <li class="l2 m"><i class="leaf"></i><svg><use href="#t-int"/></svg>Interaction Properties</li>
          <li class="l2 m"><i class="leaf"></i><svg><use href="#t-cc"/></svg>Contact Controls</li>
          <li class="l2 m"><i class="leaf"></i><svg><use href="#t-ci"/></svg>Contact Initializations</li>
          <li class="l2 m"><i class="leaf"></i><svg><use href="#t-cs"/></svg>Contact Stabilizations</li>
          <li class="l2 m"><i class="leaf"></i><svg><use href="#t-con"/></svg>Constraints</li>
          <li class="l2 m"><i class="leaf"></i><svg><use href="#t-cns"/></svg>Connector Sections</li>
          <li class="l2 m"><i class="ex"></i><svg><use href="#t-fld"/></svg>Fields</li>
          <li class="l2 m"><i class="ex"></i><svg><use href="#t-amp"/></svg>Amplitudes (1)</li>
          <li class="l2 m"><i class="ex"></i><svg><use href="#t-load"/></svg>Loads (1)</li>
          <li class="l2 m"><i class="ex"></i><svg><use href="#t-bc"/></svg>BCs (3)</li>
          <li class="l2 m"><i class="leaf"></i><svg><use href="#t-pre"/></svg>Predefined Fields</li>
          <li class="l2 m"><i class="leaf"></i><svg><use href="#t-rem"/></svg>Remeshing Rules</li>
          <li class="l2 m"><i class="leaf"></i><svg><use href="#t-opt"/></svg>Optimization Tasks</li>
          <li class="l2 m"><i class="leaf"></i><svg><use href="#t-sk"/></svg>Sketches</li>
          <li class="l0 m"><i class="leaf"></i><svg><use href="#t-ann"/></svg>Annotations</li>
          <li class="l0"><i class="ex minus"></i><svg><use href="#t-ana"/></svg>Analysis</li>
          <li class="l1 a"><i class="ex"></i><svg><use href="#t-job"/></svg>Jobs (1)</li>
          <li class="l1 a"><i class="leaf"></i><svg><use href="#t-ada"/></svg>Adaptivity Processes</li>
        </ul>
        <div class="vscroll"><i></i></div>
        </div>
        <div class="hscroll"><i></i></div>
      </div>
    </div>
  </aside>

  <div class="right">
    <div class="modbar">
      <label for="mod">Module:</label><div class="combo c-mod"><svg class="spin dark"><use href="#spin"/></svg><select id="mod"><option>Property</option></select><svg><use href="#chev"/></svg></div>
      <label for="mdl">Model:</label><div class="combo c-mdl"><svg class="spin"><use href="#spin"/></svg><select id="mdl"><option>Model-1</option></select><svg><use href="#chev"/></svg></div>
      <label for="prt">Part:</label><div class="combo c-mdl"><svg class="spin"><use href="#spin"/></svg><select id="prt"><option>Part-1</option></select><svg><use href="#chev"/></svg></div>
    </div>
    <div class="stage">
      <div class="toolbox">
        <div class="tsec first">
          <div class="tg"><button aria-label="Create material"><svg><use href="#sigeps"/></svg></button><button aria-label="Material manager"><svg><use href="#tbl"/></svg></button></div>
          <div class="tg"><button aria-label="Create section"><svg><use href="#ibeam"/></svg></button><button aria-label="Section manager"><svg><use href="#tbl"/></svg></button><button aria-label="Assign section"><svg><use href="#ibeamL"/></svg></button><button aria-label="Assignment manager"><svg><use href="#tbl"/></svg></button><button aria-label="Composite layup"><svg><use href="#stack"/></svg></button><button aria-label="Layup manager"><svg><use href="#tbl"/></svg></button><button aria-label="Material orientation"><svg><use href="#L3"/></svg></button><button aria-label="Beam orientation"><svg><use href="#n2n1"/></svg></button></div>
          <div class="tg"><button aria-label="Create profile"><svg><use href="#profile"/></svg></button><button aria-label="Profile manager"><svg><use href="#tbl"/></svg></button></div>
          <div class="tg"><button aria-label="Create skin"><svg><use href="#boxy"/></svg></button><button aria-label="Skin manager"><svg><use href="#tbl"/></svg></button></div>
          <div class="tg"><button aria-label="Create stringer"><svg><use href="#plate"/></svg></button><button aria-label="Stringer manager"><svg><use href="#tbl"/></svg></button></div>
        </div>
        <div class="tsec"><div class="tg"><button aria-label="Edit feature"><svg><use href="#tee"/></svg></button><button aria-label="Suppress"><svg><use href="#teemove"/></svg></button><button aria-label="Delete feature"><svg><use href="#erasers"/></svg></button></div></div>
        <div class="tsec"><div class="tg"><button aria-label="Datum point"><svg><use href="#plus"/></svg></button><button aria-label="Datum axis"><svg><use href="#axisline"/></svg></button><button aria-label="Datum plane"><svg><use href="#gridpts"/></svg></button></div></div>
        <div class="tsec"><div class="tg"><button aria-label="Partition edge"><svg><use href="#ptpick"/></svg></button><button aria-label="Partition face"><svg><use href="#Lhole"/></svg></button><button aria-label="Partition cell"><svg><use href="#L3d"/></svg></button><button aria-label="Repair"><svg><use href="#Lcut"/></svg></button></div></div>
        <div class="tsec"><div class="tg"><button class="xyz"><span>(XYZ)</span><svg><use href="#xyzp"/></svg></button><button aria-label="Coordinate system"><svg><use href="#csys"/></svg></button><button aria-label="Plane from system"><svg><use href="#csysplane"/></svg></button><button aria-label="System from points"><svg><use href="#csyspts"/></svg></button></div></div>
      </div>
      <div class="viewport">
        <svg id="scene" viewBox="411 157 1509 712" preserveAspectRatio="xMinYMin slice">
          <defs><linearGradient id="sky" x1="0" y1="0" x2="0" y2="1"><stop offset="0" stop-color="#1b2f48"/><stop offset=".42" stop-color="#273a57"/><stop offset=".6" stop-color="#2f4362"/><stop offset=".68" stop-color="#445974"/><stop offset=".76" stop-color="#5c6f88"/><stop offset=".88" stop-color="#7d90aa"/><stop offset="1" stop-color="#9fb0ca"/></linearGradient></defs>
          <path d="M411 157h1509v712H411z" fill="url(#sky)"/>
          <path d="M676 157H1920V778H1189A512 512 0 0 0 676 266z" fill="#d0d0ba"/>
          <path d="M1189 778H1920" stroke="#4c5460"/>
          <path d="M676 333A445 445 0 0 1 1121 778H1099A423 423 0 0 0 676 355z" fill="#3c7868" stroke="#111"/>
          <g id="cells" stroke="#1a1a1a"></g>
          <path d="M562 161V869" stroke="#d8d860" stroke-width="1" stroke-dasharray="3 5 2 5"/>
          <path d="M674 157V869" stroke="#28401c" stroke-width="3"/>
          <path d="M674 158V869" stroke="#f0ec58" stroke-width="4" stroke-dasharray="4 4 2 5"/>
          <path d="M532 796V772" stroke="#1c9820" stroke-width="5"/><path d="M532 761l7 15h-14z" fill="#0c9c10"/>
          <path d="M538 804h24" stroke="#b81c10" stroke-width="5"/><path d="M575 804l-15-7v14z" fill="#b01408"/>
          <circle cx="532" cy="804" r="7" fill="#0c14a0"/>
          <text x="532" y="746" class="tri">Y</text><text x="532" y="811" class="tri">Z</text><text x="597" y="811" class="tri">X</text>
          <path d="M1772 207A52 52 0 0 1 1824 259H1772z" fill="#62a8a8" stroke="#c8c8e8" stroke-width="3"/>
          <path d="M1744 303h67M1771 190v112" stroke="#c8c0dc" stroke-width="2"/>
          <circle cx="1771" cy="191" r="5" fill="#d4cce8"/><path d="M1764 297h14v14h-14z" fill="#dc1408"/>
          <path d="M1768 256h6v3h-6z" fill="#d8d040"/>
          <text x="1771" y="176" class="gz">Y</text><text x="1838" y="263" class="gz">X</text>
          <circle cx="592" cy="491" r="28" fill="none" stroke="#1a8836" stroke-width="4"/>
          <path d="M592 491v18l4-3 4 8 4-2-4-7h5z" fill="#d8ccb4" stroke="#222"/>
        </svg>
      </div>
    </div>
    <div class="prompt"><span class="brand"><svg viewBox="0 0 20 20"><path d="M7 1c6-1 7 4 1 5M3 9c6-1 5 7-2 10l3-8M16 8c-5-1-6 2-4 4s3 5-3 5" fill="none" stroke="#1c2c70" stroke-width="2"/></svg>SIMULIA</span></div>
  </div>
</main>

<section class="console">
  <div class="ctabs"><button class="cur" aria-label="Message area"><svg viewBox="0 0 16 20"><path d="M1 1h14v17H1z" fill="#f0ecd8" stroke="#333" stroke-width="1.4"/><path d="M1 19l5-7" stroke="#9c8c20" stroke-width="3"/></svg></button><button class="py" aria-label="Command line">&gt;&gt;&gt;</button></div>
  <div class="msgs"><pre>The model database has been saved to "D:\abaqus2024\temp\random 3m rock layer(1).cae".

Point 1: 16.82652812E+03, 14.172789119E+03, 0.  Point 2: 17.591370308E+03, 14.817006806E+03, 0.
   Distance: 1.E+03  Components: 764.842187, 644.217687, 0.

Point 1: 18.309927367E+03, 13.919287332E+03, 0.  Point 2: 17.591370308E+03, 14.817006806E+03, 0.
   Distance: 1.149880212E+03  Components: -718.557059, 897.719475, 0.

Point 1: 15.296843746E+03, 12.884353745E+03, 0.  Point 2: 15.921675971E+03, 12.103728115E+03, 0.
   Distance: <mark>999.895837 </mark> Components: 624.832225, -780.62563, 0.</pre><div class="vscroll"><i></i></div></div>
  <svg class="sizer" viewBox="0 0 12 12"><path d="M9 1h2v2H9zM5 5h2v2H5zM9 5h2v2H9zM1 9h2v2H1zM5 9h2v2H5zM9 9h2v2H9z" fill="#bbb"/></svg>
</section>

<footer class="taskbar">
  <button class="start" aria-label="Start"><svg viewBox="0 0 22 22"><path d="M0 0h10v10H0zM11 0h10v10H11zM0 11h10v10H0zM11 11h10v10H11z" fill="#1481d8"/></svg></button>
  <div class="search"><svg viewBox="0 0 16 16"><circle cx="7" cy="7" r="5" fill="none" stroke="#222" stroke-width="1.5"/><path d="M11 11l4 4" stroke="#222" stroke-width="1.6"/></svg><input type="text" aria-label="搜索" placeholder="搜索"><svg class="art" viewBox="0 0 42 24"><path d="M2 14l18 4 20-4v6l-20 3-18-3z" fill="#48a0b8"/><path d="M4 12q8-2 16 5 8-7 17-5l-3 6-14 3-13-3z" fill="#e8dcb0"/><path d="M5 12V7h4v6M12 14V5h3v10M18 15V8l3-6 3 6v7M28 14V6h4v8" fill="#c8a878" stroke="#7c5c3c"/><circle cx="34" cy="6" r="4" fill="#3c8c4c"/><circle cx="8" cy="6" r="3" fill="#4c9c54"/><path d="M34 8v8" stroke="#7c4c28" stroke-width="2"/><path d="M1 20q10 4 20 1t20 0" fill="none" stroke="#2c6c84" stroke-width="2"/></svg></div>
  <nav class="apps">
    <button aria-label="Task view"><svg viewBox="0 0 24 24"><path d="M8 3h14v15H8z" fill="#ddd"/><path d="M2 7h13v14H2z" fill="#222"/><path d="M8 7h7v9H8z" fill="#999"/></svg></button>
    <button aria-label="Calculator"><svg viewBox="0 0 24 24"><path d="M4 1h17v22H4z" fill="#37617c"/><path d="M6 3h13v5H6z" fill="#5cc0e8"/><path d="M6 10h4v4H6zM6 16h4v5H6z" fill="#fff"/><path d="M12 10h3v4h-3zM12 16h3v5h-3zM16 10h3v11h-3z" fill="#2f86c4"/></svg></button>
    <button class="run" aria-label="Explorer"><svg viewBox="0 0 24 24"><path d="M0 2h9l2 3h12v17H0z" fill="#e9a824"/><path d="M0 7h23v15H0z" fill="#fbcf48"/><path d="M4 22v-5q0-2 2-2h11q2 0 2 2v5z" fill="#1a72b8"/></svg></button>
    <button class="run" aria-label="Monitor"><svg viewBox="0 0 24 24"><path d="M1 2h22v20H1z" fill="#1468bc"/><path d="M1 2h22v4H1z" fill="#4ca4e8"/><path d="M1 14l6-5 4 7 5-9 7 8v7H1z" fill="#7cc8f4"/></svg></button>
    <button aria-label="WeChat"><svg viewBox="0 0 24 24"><ellipse cx="10" cy="9" rx="9" ry="8" fill="#1fb45a"/><path d="M3 13l0 6 5-3z" fill="#1fb45a"/><ellipse cx="17" cy="15" rx="6" ry="5" fill="#e4f0e4"/><circle cx="7" cy="7" r="1" fill="#064"/><circle cx="13" cy="7" r="1" fill="#064"/><circle cx="15" cy="14" r="1" fill="#464"/><circle cx="19" cy="14" r="1" fill="#464"/></svg></button>
    <button aria-label="Everything"><svg viewBox="0 0 24 24"><circle cx="14" cy="9" r="6" fill="none" stroke="#e87414" stroke-width="4"/><path d="M10 13l-7 9" stroke="#e87414" stroke-width="4"/></svg></button>
    <button aria-label="Browser"><svg viewBox="0 0 24 24"><path d="M18 17c-3 6-12 5-12-3S18 4 18 12H7" fill="none" stroke="#54a824" stroke-width="4"/><path d="M5 16C2 8 14 0 21 3" fill="none" stroke="#88c83c" stroke-width="2"/></svg></button>
    <button aria-label="Studio"><svg viewBox="0 0 24 24"><rect x="1" y="0" width="22" height="24" rx="5" fill="#15171c"/><path d="M7 5v9l5 5 5-5V5M7 5l5 6 5-6M12 11v8" fill="none" stroke="#aab" stroke-width="1.4"/></svg></button>
    <button class="run hot" aria-label="Terminal"><svg viewBox="0 0 24 24"><path d="M1 2h22v20H1z" fill="#26282c"/><path d="M1 2h22v4H1z" fill="#667"/><path d="M5 10l5 4-5 4M12 18h7" fill="none" stroke="#fff" stroke-width="2"/></svg></button>
    <button class="run" aria-label="Recorder"><svg viewBox="0 0 24 24"><path d="M9 0l11 3-5 12-12-4z" fill="#e05848"/><path d="M3 11l12 4-2 5-11-4z" fill="#f4f4f4" stroke="#bbb"/><path d="M18 13v9M14 18h9" stroke="#e8b838" stroke-width="3"/></svg></button>
    <button class="run blue" aria-label="Abaqus"><svg viewBox="0 0 24 24"><circle cx="12" cy="12" r="8" fill="#4c5898"/><path d="M9 0h6v24H9z" fill="#5c68a4"/><path d="M0 9h24v6H0z" fill="#5c68a4"/><path d="M1 12h22" stroke="#dde" stroke-width="1.6"/></svg></button>
  </nav>
  <div class="weather"><svg viewBox="0 0 26 30"><circle cx="10" cy="15" r="9" fill="#f0a02c"/><ellipse cx="14" cy="23" rx="10" ry="5" fill="#9cc4f0"/><circle cx="14" cy="20" r="5" fill="#b8d8f8"/><circle cx="17" cy="8" r="7" fill="#c4361c"/><path d="M15 7l2-2v7" fill="none" stroke="#fff" stroke-width="1.4"/></svg><div><span>19°C</span><span>局部晴朗</span></div></div>
  <div class="tray">
    <svg viewBox="0 0 20 20"><path d="M5 12l5-5 5 5" fill="none" stroke="#222" stroke-width="1.6"/></svg>
    <svg viewBox="0 0 20 20"><rect x="7" y="2" width="6" height="10" rx="3" fill="#9cc0e8" stroke="#2c5c9c" stroke-width="1.3"/><path d="M4 9c0 8 12 8 12 0M10 15v4" fill="none" stroke="#2c5c9c" stroke-width="1.4"/></svg>
    <span>英</span>
    <svg viewBox="0 0 20 20"><path d="M2 9q8-7 16 0M5 12q5-5 10 0M7 15q3-3 6 0" fill="none" stroke="#222" stroke-width="1.4"/><circle cx="10" cy="16" r="1"/></svg>
    <svg viewBox="0 0 20 20"><path d="M2 8h3l4-4v12l-4-4H2z" fill="none" stroke="#222" stroke-width="1.2"/><path d="M12 7q2 3 0 6M14 5q4 5 0 10M17 4q4 6 0 12" fill="none" stroke="#333"/></svg>
    <svg viewBox="0 0 20 20"><path d="M7 6h10v9H7M18 9v3" fill="none" stroke="#222" stroke-width="1.6"/><path d="M1 8l5-5v4h3l-4 6h5v3H1z" fill="#222"/></svg>
  </div>
  <div class="clock"><span>14:53</span><span>2025/4/2</span></div>
  <svg class="bell" viewBox="0 0 20 20"><path d="M3 15V9c0-8 13-8 13 0v6h2v1H1v-1zM7 17h5q-2 3-5 0z" fill="#222"/><path d="M8 7h4l-4 5h4M14 2h4l-3 3h3" fill="none" stroke="#eee" stroke-width="1.3"/></svg>
</footer>

<div class="keycast k1"><kbd>Alt</kbd><span>+</span><span>Tab</span></div>
<div class="keycast k2"><kbd>Alt</kbd><span>+</span><span>Tab</span></div>
<div class="stamp">249828</div>
<script src="mesh.js"></script>
</body>
</html>
```
FILE: styles.css
```css
* { box-sizing: border-box; }
body {
  margin: 0; min-height: 100vh; overflow: hidden; position: relative;
  display: flex; flex-direction: column;
  background: #f2f2f2; color: #1c1c1c;
  font: 12px/16px "Noto Sans CJK SC", "Open Sans", sans-serif;
}
button, select, input { font: inherit; color: inherit; border: 0; background: none; padding: 0; margin: 0; border-radius: 0; }
select { appearance: none; outline: 0; }
svg { display: block; flex: none; }
i { font-style: normal; }
.sprite { position: absolute; width: 0; height: 0; }

.titlebar { display: flex; align-items: center; height: 23px; padding: 0 17px 4px 1px; background: #f3f3f3; }
.appicon { width: 14px; height: 14px; }
.title { flex: 1; margin-left: 7px; white-space: nowrap; font-size: 11px; }
.winbtn { width: 12px; height: 12px; margin-left: 34px; }
.winbtn svg { width: 10px; height: 10px; }

.menubar { display: flex; align-items: center; height: 24px; padding: 0 0 2px 4px; background: linear-gradient(90deg, #fdfdfd, #f0f0f0); }
.menubar > button { margin-left: 14px; white-space: nowrap; }
.menubar u { text-underline-offset: 2px; }
.menubar > button:first-of-type { margin-left: 9px; }
.helpicon { width: 14px; height: 14px; }
.mdi { margin-left: auto; display: flex; gap: 7px; padding: 0 5px 2px 0; }
.mdi button { background: #fff; width: 12px; height: 12px; padding: 1px; }
.mdi svg { width: 10px; height: 10px; }

.dock { border-top: 1px solid #ccc; background: linear-gradient(90deg, #fcfcfc, #f6f6f6 50%, #eee); }
.dockrow { display: flex; height: 26px; }
.r2 { padding-left: 1263px; }
.r3 { padding-left: 995px; }
.bar { display: flex; border: solid #bbb; border-width: 0 1px 1px 0; background: linear-gradient(#fdfdfd, #f0f0f0); }
.b-display { margin-left: 115px; }
.b-select { margin-left: 4px; }
.grp { display: flex; align-items: center; border-left: 1px solid #ccc; }
.grp:first-child { border-left: 0; }
.grip { width: 2px; height: 16px; margin: 0 3px; background: repeating-linear-gradient(#aaa 0 2px, transparent 2px 4px); }
.set { flex: 1; display: flex; justify-content: space-around; }
.grp button { position: relative; width: 24px; height: 24px; display: grid; place-items: center; }
.grp button svg { width: 19px; height: 19px; }
.set.big button svg { width: 22px; height: 22px; }
.set b { position: absolute; font: 700 9px/9px "Open Sans", sans-serif; color: #c83418; }
.p1 { left: 8px; top: 0; } .p2 { left: 16px; top: 8px; }
.p3 { left: 9px; top: 0; } .p4 { left: 1px; top: 8px; }
.p5 { left: 14px; top: 8px; } .p6 { left: 8px; top: 15px; }
.p7 { left: 9px; top: 0; }
.grp .num { color: #c83c1c; font: 700 17px/20px "Open Sans", sans-serif; }
.g-file { width: 154px; } .g-views { width: 301px; } .g-three { width: 81px; } .g-info { width: 32px; }
.g-win { width: 157px; } .g-anno { width: 147px; } .g-pan { width: 155px; } .g-two { width: 57px; } .g-bool { width: 203px; }
.drop { border: 4px solid transparent; border-top-color: #111; border-bottom: 0; margin: 0 4px 0 2px; }
.vsep { width: 1px; height: 20px; background: #aaa; }
.grp .on { background: #c4dcf4; }
.grp .boxed { width: 20px; height: 20px; align-self: center; border: 2px solid #222; background: #fff; color: #b02010; font: 700 16px/16px "Liberation Serif", serif; }

.combo { display: flex; align-items: center; height: 22px; background: #fff; border: solid #888; border-width: 2px 1px 1px 2px; }
.combo select { flex: 1; min-width: 0; height: 100%; padding-left: 2px; }
.combo > svg:last-child { width: 10px; height: 100%; border-left: 1px solid #ccc; }
.grp .combo { border: 1px solid #aaa; }
.c-mat { width: 129px; }
.grp .c-all { width: 110px; background: #aecbeb; }
.c-mod { width: 106px; margin: 0 12px 0 4px; }
.c-mdl { width: 92px; margin: 0 12px 0 4px; }
.spin { width: 8px; height: 16px; color: #999; margin-left: 2px; }
.spin.dark { color: #222; }

.work { flex: 1; display: flex; min-height: 0; background: #fafafa; }
.side { width: 353px; padding: 7px 5px 5px 2px; display: flex; flex-direction: column; }
.tabs { display: flex; height: 23px; }
.tabs button { padding: 0 6px; background: #f2f2f2; border: 1px solid #e8e8e8; }
.tabs .cur { background: #fcfcfc; padding: 0 7px; }
.panel { flex: 1; display: flex; flex-direction: column; border: 1px solid #ddd; padding: 4px 0 0 2px; min-height: 0; }
.dbrow { display: flex; align-items: center; gap: 8px; height: 26px; padding-bottom: 5px; }
.dbrow > svg { width: 10px; height: 16px; }
.dbrow button svg { width: 16px; height: 14px; }
.c-db { width: 251px; height: 21px; border: 1px solid #aaa; }
.dbico { width: 16px; height: 14px; margin-left: 2px; }
.tree { flex: 1; display: flex; flex-direction: column; border: 1px solid #aaa; background: #fff; min-height: 0; }
.treebody { flex: 1; display: flex; min-height: 0; }
.tree ul { flex: 1; min-width: 0; margin: 0; padding: 1px 0 6px; list-style: none; display: grid; grid-auto-rows: 1fr; overflow: hidden; }
.tree li { position: relative; display: flex; align-items: center; white-space: nowrap; min-height: 0; }
.tree li svg { width: 15px; height: 15px; margin: 0 5px 0 3px; }
.l0 { padding-left: 1px; } .l1 { padding-left: 18px; } .l2 { padding-left: 35px; } .l3 { padding-left: 52px; }
.tree .m::before, .tree .l2::after, .tree .l3::after, .tree .a::after {
  content: ""; position: absolute; top: 0; bottom: 0; left: 5px; width: 1px;
  background: repeating-linear-gradient(#999 0 1px, transparent 1px 3px);
}
.tree .l2::after { left: 39px; }
.tree .l3::after { left: 56px; }
.tree .a::after { left: 22px; }
.ex { position: relative; z-index: 1; width: 9px; height: 9px; border: 1px solid #909aa8; flex: none;
  background: linear-gradient(#345, #345) center / 5px 1px no-repeat, linear-gradient(#345, #345) center / 1px 5px no-repeat, #fff; }
.minus { background: linear-gradient(#345, #345) center / 5px 1px no-repeat, #fff; }
.leaf { width: 9px; flex: none; }
.l3 .ex { margin-right: 3px; }
.root { margin-left: 5px; line-height: 15px; border-bottom: 1px solid #111; }
.vscroll { width: 15px; background: #f0f0f0; display: flex; justify-content: center; }
.vscroll i { width: 2px; background: #888; }
.treebody .vscroll { width: 12px; justify-content: flex-start; padding-left: 4px; }
.treebody .vscroll i { margin: 31px 0 49px; }
.hscroll { height: 14px; background: #f0f0f0; padding: 6px 63px 0 16px; }
.hscroll i { display: block; height: 2px; background: #888; }

.right { flex: 1; min-width: 0; display: flex; flex-direction: column; background: #f4f4f4; }
.modbar { display: flex; align-items: center; height: 30px; padding: 0 0 2px 7px; background: linear-gradient(#fff, #ededed); }
.stage { flex: 1; display: flex; min-height: 0; }
.toolbox { width: 57px; padding: 0 1px 0 2px; background: linear-gradient(90deg, #fff, #ececec); }
.tg { display: grid; grid-template-columns: 27px 27px; grid-auto-rows: 26px; }
.tg button { display: grid; place-items: center; position: relative; }
.tg svg { width: 20px; height: 20px; }
.tg + .tg { margin-top: 5px; }
.tsec { border-top: 1px solid #aaa; padding: 5px 0 1px; }
.tsec.first { border: 0; padding-top: 4px; }
.xyz span { position: absolute; top: 2px; left: 0; width: 27px; font: 700 8px/10px "DejaVu Sans", sans-serif; text-align: center; }
.viewport { flex: 1; min-width: 0; min-height: 0; border: solid #666; border-width: 1px 0 0 1px; position: relative; overflow: hidden; }
#scene { width: 100%; height: 100%; }
.tri { font: 700 24px "DejaVu Sans", sans-serif; fill: #fff; text-anchor: middle; }
.gz { font: 700 12px "DejaVu Sans", sans-serif; fill: #d2cc8c; text-anchor: middle; }
.prompt { height: 35px; background: linear-gradient(#fff, #ededed); display: flex; justify-content: flex-end; align-items: center; padding-right: 4px; }
.brand { display: flex; align-items: center; gap: 5px; color: #1c2c70; font: italic 600 18px/20px "Open Sans", sans-serif; }
.brand svg { width: 20px; height: 20px; }

.console { display: flex; height: 130px; padding: 1px 0 2px 2px; background: #f6f6f6; }
.ctabs { width: 36px; display: flex; flex-direction: column; }
.ctabs button { width: 34px; height: 34px; display: grid; place-items: center; background: #efefef; }
.ctabs .cur { background: #fafafa; border-left: 1px solid #ccc; }
.ctabs svg { width: 18px; height: 22px; }
.ctabs .py { width: 24px; height: 24px; margin: 4px 0 0 7px; background: #f4dc6c; border: 2px solid #222; font: 700 9px/16px "DejaVu Sans", sans-serif; }
.msgs { flex: 1; display: flex; min-width: 0; background: #fff; border: 1px solid #aaa; }
.msgs pre { flex: 1; margin: 0; padding: 2px 4px; overflow: hidden; font: 15px/12px "Noto Sans Mono CJK SC", "Liberation Mono", monospace; color: #222; }
.msgs mark { background: linear-gradient(#c02818, #c02818) right 60% / 2px 13px no-repeat, linear-gradient(#0a74d8, #0a74d8) 0 60% / 100% 13px no-repeat; color: #fff; }
.msgs .vscroll i { height: 15px; align-self: flex-end; margin-bottom: 15px; }
.sizer { width: 12px; height: 12px; align-self: flex-end; margin: 0 2px 0 4px; }

.taskbar { display: flex; align-items: center; height: 46px; border-top: 1px solid #aaa; background: #eee; padding: 0 16px 0 20px; color: #222; }
.start { width: 22px; height: 22px; }
.start svg { width: 21px; height: 22px; }
.search { display: flex; align-items: center; width: 206px; height: 30px; margin-left: 13px; padding: 0 4px 0 9px; border-radius: 15px; background: #fbfbfb; border: 1px solid #ddd; }
.search svg { width: 16px; height: 16px; }
.search input { flex: 1; min-width: 0; margin-left: 8px; font-size: 13px; outline: 0; }
.search input::placeholder { color: #333; opacity: 1; }
.search .art { width: 42px; height: 24px; }
.apps { display: flex; gap: 3px; margin-left: 4px; }
.apps button { width: 38px; height: 38px; display: grid; place-items: center; position: relative; border-radius: 4px; }
.apps svg { width: 22px; height: 22px; }
.run::after { content: ""; position: absolute; left: 16px; bottom: 0; width: 6px; height: 3px; border-radius: 2px; background: #888; }
.apps .hot { background: #eeb0a4; }
.apps .hot::after { background: #c8341c; }
.apps .blue { background: #f8f8fb; }
.apps .blue::after { background: #1468bc; width: 10px; left: 14px; }
.weather { margin-left: auto; width: 148px; display: flex; gap: 4px; align-items: center; font-size: 11px; line-height: 15px; white-space: nowrap; }
.weather svg { width: 24px; height: 30px; }
.weather span, .clock span { display: block; }
.tray { display: flex; align-items: center; font-size: 14px; }
.tray svg { width: 18px; height: 18px; }
.tray svg:first-child { margin-right: 12px; }
.tray span { margin: 0 14px; }
.tray svg ~ svg ~ svg { margin-right: 5px; }
.clock { width: 53px; text-align: right; font-size: 11px; line-height: 15px; }
.bell { width: 18px; height: 18px; margin-left: 7px; }

.keycast { position: absolute; left: 4px; width: 145px; height: 57px; border-radius: 9px; background: rgba(96, 96, 96, .78); color: #fff; display: flex; align-items: center; gap: 14px; padding-left: 7px; font: 700 26px/34px "Noto Sans", sans-serif; }
.keycast kbd { width: 42px; height: 42px; border-radius: 6px; background: #fff; color: #777; font: 600 26px/42px "Noto Sans", sans-serif; text-align: center; }
.k1 { top: 1px; }
.k2 { top: 72px; }
.k1 kbd { background: rgba(255, 255, 255, .82); }
.stamp { position: absolute; left: -18px; top: 470px; font: 70px/96px "Noto Sans", sans-serif; color: #f01c0c; }
```
FILE: mesh.js
```js
// Colours of the rock-layer cells, one letter per cell, from the crown (0) down to the springline (31).
const palette = {
  t: '#c8a26e', b: '#98acd4', l: '#a0a0c4', B: '#005090', g: '#3c7868', w: '#ccc8cc',
  e: '#d0d0b8', s: '#aebba0', n: '#b49060', k: '#c8c48c', o: '#78766a', r: '#a84034',
  S: '#606e80', N: '#2c3888', y: '#a09c5c', c: '#cf8868', a: '#a0b0ac', p: '#804c7c',
  G: '#d0a800', q: '#94b8c8', m: '#841c48', V: '#6058b0', D: '#003060'
};
const rings = [
  { r0: 490, r1: 512, cells: 'ttblBgwesnklosctgmpVVaqNnmNropaa' },
  { r0: 467, r1: 490, cells: 'trrSwoNswnybcBBVmclecGyasDwgsclw' },
  { r0: 445, r1: 467, cells: 'NboaSpGncqgagoqbssVpBwqptggcmtaG' }
];
const centre = { x: 677, y: 778 };
const step = 2.873;

function point(radius, angle) {
  const a = angle * Math.PI / 180;
  return (centre.x + radius * Math.sin(a)).toFixed(1) + ',' + (centre.y - radius * Math.cos(a)).toFixed(1);
}

const group = document.getElementById('cells');
for (const ring of rings) {
  [...ring.cells].forEach((key, i) => {
    const a0 = Math.max(0, 90 - (32 - i) * step);
    const a1 = 90 - (31 - i) * step;
    const cell = document.createElementNS('http://www.w3.org/2000/svg', 'polygon');
    cell.setAttribute('points', [point(ring.r0, a0), point(ring.r1, a0), point(ring.r1, a1), point(ring.r0, a1)].join(' '));
    cell.setAttribute('fill', palette[key]);
    group.appendChild(cell);
  });
}
```
